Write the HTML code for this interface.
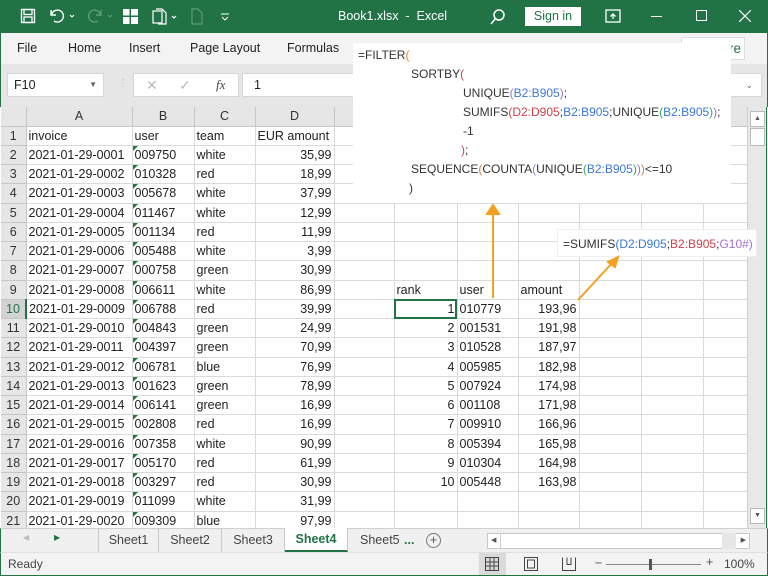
<!DOCTYPE html>
<html><head><meta charset="utf-8"><style>
*{margin:0;padding:0;box-sizing:border-box}
body{width:768px;height:576px;overflow:hidden;background:#fff;font-family:"Liberation Sans",sans-serif;font-size:12.5px;color:#222;position:relative}
.abs{position:absolute}
#title{left:0;top:0;width:768px;height:33px;background:#217346;color:#fff}
#rib{left:0;top:33px;width:768px;height:31px;background:#f3f3f3;border-left:1px solid #217346;border-right:1px solid #217346}
#fbar{left:0;top:64px;width:768px;height:43px;background:#e6e6e6;border-left:1px solid #217346;border-right:1px solid #217346}
table{position:absolute;left:1px;top:107px;border-collapse:collapse;table-layout:fixed}
td{height:19.25px;border-right:1px solid #dadada;border-bottom:1px solid #dadada;padding:0 2px;white-space:nowrap;overflow:hidden;position:relative;font-size:12.5px;line-height:18px}
tr.h td{background:#e6e6e6;text-align:center;height:19px;border-color:#c6c6c6;color:#333}
td.rh{background:#e6e6e6;text-align:center;border-color:#c6c6c6;color:#333;padding:0}
td.r{text-align:right}
td.t::before{content:"";position:absolute;left:0;top:0;border-top:5px solid #1e7b34;border-right:5px solid transparent}
#tabs{left:0;top:528px;width:768px;height:24px;background:#f0f0f0;border-left:1px solid #217346;border-right:1px solid #217346;border-top:1px solid #d0d0d0}
#status{left:0;top:552px;width:768px;height:24px;background:#f3f3f3;border:1px solid #217346;border-top:1px solid #e0e0e0}
.tab{position:absolute;top:0;height:23px;line-height:22px;color:#444;font-size:12.5px;text-align:center;border-right:1px solid #c8c8c8}
.call{background:#fff;color:#333;font-size:12px}
.b{color:#3c78d8}.rd{color:#d0404a}.p{color:#a070d0}.g{color:#3aa860}.o{color:#e08030}
</style></head><body>
<div id="title" class="abs">
<svg class="abs" style="left:20px;top:8px" width="16" height="16" viewBox="0 0 16 16" fill="none" stroke="#fff" stroke-width="1.3"><rect x="1.5" y="1.5" width="13" height="13"/><rect x="4" y="1.5" width="8" height="5"/><rect x="4" y="9" width="8" height="5.5"/></svg>
<svg class="abs" style="left:48px;top:7px" width="30" height="18" viewBox="0 0 30 18" fill="none" stroke="#fff" stroke-width="1.4"><path d="M3 3v5h5M3.5 8A6 6 0 1 1 6 14"/><path d="M22 8l2 2 2-2" stroke-width="1"/></svg>
<svg class="abs" style="left:86px;top:7px" width="30" height="18" viewBox="0 0 30 18" fill="none" stroke="#5f9a7a" stroke-width="1.4"><path d="M15 3v5h-5M14.5 8A6 6 0 1 0 12 14"/><path d="M22 8l2 2 2-2" stroke-width="1"/></svg>
<svg class="abs" style="left:123px;top:9px" width="15" height="15" viewBox="0 0 15 15" fill="#fff"><rect x="0" y="0" width="6.5" height="6.5"/><rect x="8" y="0" width="7" height="6.5"/><rect x="0" y="8" width="6.5" height="7"/><rect x="8" y="8" width="7" height="7"/></svg>
<svg class="abs" style="left:152px;top:8px" width="28" height="18" viewBox="0 0 28 18" fill="none" stroke="#fff" stroke-width="1.2"><rect x="1" y="3" width="9" height="12"/><path d="M4 1h6l4 4v11H6"/><path d="M20 8l2 2 2-2"/></svg>
<svg class="abs" style="left:190px;top:8px" width="14" height="18" viewBox="0 0 14 18" fill="none" stroke="#5f9a7a" stroke-width="1.2"><path d="M2 1h6l4 4v11H2z"/></svg>
<svg class="abs" style="left:220px;top:12px" width="10" height="10" viewBox="0 0 10 10" fill="none" stroke="#fff"><path d="M1 2h8M2 5l3 3 3-3"/></svg>
<div class="abs" style="left:338px;top:9px;font-size:12.5px">Book1.xlsx &nbsp;- &nbsp;Excel</div>
<svg class="abs" style="left:489px;top:8px" width="18" height="18" viewBox="0 0 18 18" fill="none" stroke="#fff" stroke-width="1.5"><circle cx="10" cy="7" r="5"/><path d="M6.5 10.5L2 16"/></svg>
<div class="abs" style="left:525px;top:7px;width:56px;height:19px;background:#fff;color:#217346;text-align:center;line-height:19px;font-size:12.5px">Sign in</div>
<svg class="abs" style="left:605px;top:9px" width="16" height="14" viewBox="0 0 16 14" fill="none" stroke="#fff" stroke-width="1.3"><rect x="1" y="1" width="14" height="12"/><path d="M8 10V5M5.5 7.5L8 5l2.5 2.5" /></svg>
<div class="abs" style="left:651px;top:16px;width:11px;height:1px;background:#fff"></div>
<div class="abs" style="left:696px;top:10px;width:11px;height:11px;border:1px solid #fff"></div>
<svg class="abs" style="left:739px;top:10px" width="12" height="12" viewBox="0 0 12 12" stroke="#fff" stroke-width="1.2"><path d="M0 0L12 12M12 0L0 12"/></svg>
</div>
<div id="rib" class="abs">
<div class="abs" style="left:16px;top:8px">File</div>
<div class="abs" style="left:67px;top:8px">Home</div>
<div class="abs" style="left:128px;top:8px">Insert</div>
<div class="abs" style="left:189px;top:8px">Page Layout</div>
<div class="abs" style="left:286px;top:8px">Formulas</div>
<div class="abs" style="left:680px;top:4px;width:64px;height:23px;background:#fff;border:1px solid #ddd;color:#217346;text-align:right;padding-right:3px;line-height:21px;font-size:13.5px">Share</div>
</div>
<div id="fbar" class="abs">
<div class="abs" style="left:6px;top:9px;width:97px;height:24px;background:#fff;border:1px solid #d6d6d6;padding-left:6px;line-height:22px">F10<span style="position:absolute;right:6px;top:0;font-size:8px;color:#666">▼</span></div>
<div class="abs" style="left:117px;top:14px;color:#bbb;font-size:10px">⋮</div>
<div class="abs" style="left:132px;top:9px;width:106px;height:24px;background:#fff;border:1px solid #d6d6d6;color:#bbb"><span class="abs" style="left:12px;top:3px;font-size:14px">✕</span><span class="abs" style="left:45px;top:3px;font-size:14px">✓</span><span class="abs" style="left:82px;top:3px;font-style:italic;font-family:'Liberation Serif';color:#444;font-size:13px">fx</span></div>
<div class="abs" style="left:241px;top:9px;width:520px;height:24px;background:#fff;border:1px solid #d6d6d6;padding-left:11px;line-height:22px">1<span style="position:absolute;right:8px;top:0;font-size:9px;color:#666">⌄</span></div>
</div>
<table>
<colgroup><col style="width:25px"><col style="width:106px"><col style="width:62px"><col style="width:61px"><col style="width:79px"><col style="width:60px"><col style="width:63px"><col style="width:61px"><col style="width:61px"><col style="width:62px"><col style="width:62px"><col style="width:46px"></colgroup>
<tr class="h"><td></td><td>A</td><td>B</td><td>C</td><td>D</td><td>E</td><td style="background:#d2d2d2;color:#217346;border-bottom:2px solid #217346">F</td><td>G</td><td>H</td><td>I</td><td>J</td><td>K</td></tr>
<tr><td class="rh">1</td><td>invoice</td><td>user</td><td>team</td><td>EUR amount</td><td></td><td></td><td></td><td></td><td></td><td></td><td></td></tr>
<tr><td class="rh">2</td><td>2021-01-29-0001</td><td class="t">009750</td><td>white</td><td class="r">35,99</td><td></td><td></td><td></td><td></td><td></td><td></td><td></td></tr>
<tr><td class="rh">3</td><td>2021-01-29-0002</td><td class="t">010328</td><td>red</td><td class="r">18,99</td><td></td><td></td><td></td><td></td><td></td><td></td><td></td></tr>
<tr><td class="rh">4</td><td>2021-01-29-0003</td><td class="t">005678</td><td>white</td><td class="r">37,99</td><td></td><td></td><td></td><td></td><td></td><td></td><td></td></tr>
<tr><td class="rh">5</td><td>2021-01-29-0004</td><td class="t">011467</td><td>white</td><td class="r">12,99</td><td></td><td></td><td></td><td></td><td></td><td></td><td></td></tr>
<tr><td class="rh">6</td><td>2021-01-29-0005</td><td class="t">001134</td><td>red</td><td class="r">11,99</td><td></td><td></td><td></td><td></td><td></td><td></td><td></td></tr>
<tr><td class="rh">7</td><td>2021-01-29-0006</td><td class="t">005488</td><td>white</td><td class="r">3,99</td><td></td><td></td><td></td><td></td><td></td><td></td><td></td></tr>
<tr><td class="rh">8</td><td>2021-01-29-0007</td><td class="t">000758</td><td>green</td><td class="r">30,99</td><td></td><td></td><td></td><td></td><td></td><td></td><td></td></tr>
<tr><td class="rh">9</td><td>2021-01-29-0008</td><td class="t">006611</td><td>white</td><td class="r">86,99</td><td></td><td>rank</td><td>user</td><td>amount</td><td></td><td></td><td></td></tr>
<tr><td class="rh" style="background:#d2d2d2;color:#217346;border-right:2px solid #217346">10</td><td>2021-01-29-0009</td><td class="t">006788</td><td>red</td><td class="r">39,99</td><td></td><td class="r" style="outline:2px solid #217346;outline-offset:-2px">1</td><td>010779</td><td class="r">193,96</td><td></td><td></td><td></td></tr>
<tr><td class="rh">11</td><td>2021-01-29-0010</td><td class="t">004843</td><td>green</td><td class="r">24,99</td><td></td><td class="r">2</td><td>001531</td><td class="r">191,98</td><td></td><td></td><td></td></tr>
<tr><td class="rh">12</td><td>2021-01-29-0011</td><td class="t">004397</td><td>green</td><td class="r">70,99</td><td></td><td class="r">3</td><td>010528</td><td class="r">187,97</td><td></td><td></td><td></td></tr>
<tr><td class="rh">13</td><td>2021-01-29-0012</td><td class="t">006781</td><td>blue</td><td class="r">76,99</td><td></td><td class="r">4</td><td>005985</td><td class="r">182,98</td><td></td><td></td><td></td></tr>
<tr><td class="rh">14</td><td>2021-01-29-0013</td><td class="t">001623</td><td>green</td><td class="r">78,99</td><td></td><td class="r">5</td><td>007924</td><td class="r">174,98</td><td></td><td></td><td></td></tr>
<tr><td class="rh">15</td><td>2021-01-29-0014</td><td class="t">006141</td><td>green</td><td class="r">16,99</td><td></td><td class="r">6</td><td>001108</td><td class="r">171,98</td><td></td><td></td><td></td></tr>
<tr><td class="rh">16</td><td>2021-01-29-0015</td><td class="t">002808</td><td>red</td><td class="r">16,99</td><td></td><td class="r">7</td><td>009910</td><td class="r">166,96</td><td></td><td></td><td></td></tr>
<tr><td class="rh">17</td><td>2021-01-29-0016</td><td class="t">007358</td><td>white</td><td class="r">90,99</td><td></td><td class="r">8</td><td>005394</td><td class="r">165,98</td><td></td><td></td><td></td></tr>
<tr><td class="rh">18</td><td>2021-01-29-0017</td><td class="t">005170</td><td>red</td><td class="r">61,99</td><td></td><td class="r">9</td><td>010304</td><td class="r">164,98</td><td></td><td></td><td></td></tr>
<tr><td class="rh">19</td><td>2021-01-29-0018</td><td class="t">003297</td><td>red</td><td class="r">30,99</td><td></td><td class="r">10</td><td>005448</td><td class="r">163,98</td><td></td><td></td><td></td></tr>
<tr><td class="rh">20</td><td>2021-01-29-0019</td><td class="t">011099</td><td>white</td><td class="r">31,99</td><td></td><td></td><td></td><td></td><td></td><td></td><td></td></tr>
<tr><td class="rh">21</td><td>2021-01-29-0020</td><td class="t">009309</td><td>blue</td><td class="r">97,99</td><td></td><td></td><td></td><td></td><td></td><td></td><td></td></tr>
</table>
<div class="abs" style="left:747px;top:107px;width:20px;height:421px;background:#e8e8e8;border-left:1px solid #d0d0d0;border-right:1px solid #217346">
<div class="abs" style="left:2px;top:4px;width:15px;height:16px;background:#fff;border:1px solid #bbb;font-size:7px;text-align:center;line-height:14px;color:#555">▲</div>
<div class="abs" style="left:2px;top:21px;width:15px;height:18px;background:#fff;border:1px solid #bbb"></div>
<div class="abs" style="left:2px;top:401px;width:15px;height:16px;background:#fff;border:1px solid #bbb;font-size:7px;text-align:center;line-height:14px;color:#555">▼</div>
</div>
<div class="abs call" style="left:353px;top:43px;width:378px;height:160px;line-height:19px;padding-top:3px">
<div style="padding-left:5px">=FILTER<span class="o">(</span></div>
<div style="padding-left:58px">SORTBY<span class="rd">(</span></div>
<div style="padding-left:110px">UNIQUE<span class="p">(</span><span class="b">B2:B905</span><span class="p">)</span>;</div>
<div style="padding-left:110px">SUMIFS<span class="rd">(</span><span class="rd">D2:D905</span>;<span class="b">B2:B905</span>;UNIQUE<span class="g">(</span><span class="b">B2:B905</span><span class="g">)</span><span class="p">)</span>;</div>
<div style="padding-left:110px">-1</div>
<div style="padding-left:108px"><span class="rd">)</span>;</div>
<div style="padding-left:58px">SEQUENCE<span class="o">(</span>COUNTA<span class="p">(</span>UNIQUE<span class="g">(</span><span class="b">B2:B905</span><span class="g">)</span><span class="p">)</span><span class="o">)</span>&lt;=10</div>
<div style="padding-left:56px">)</div>
</div>
<div class="abs call" style="left:557px;top:229px;width:200px;height:28px;line-height:28px;padding-left:5px;border:1px solid #eee">=SUMIFS<span class="b">(D2:D905</span>;<span class="rd">B2:B905</span>;<span class="p">G10#)</span></div>
<svg class="abs" style="left:0;top:0" width="768" height="576" viewBox="0 0 768 576" fill="none" stroke="#f5a020" stroke-width="2">
<path d="M493 298V210"/><path d="M487 214l6-9 6 9z" fill="#f5a020"/>
<path d="M578 300L614 261"/><path d="M608 262l10-5-3 10z" fill="#f5a020"/>
</svg>
<div id="tabs" class="abs">
<div class="abs" style="left:22px;top:4px;color:#bbb;font-size:8px">◀</div>
<div class="abs" style="left:53px;top:4px;color:#217346;font-size:8px">▶</div>
<div class="abs" style="left:97px;top:0;width:1px;height:23px;background:#c8c8c8"></div>
<div class="tab" style="left:98px;width:60px">Sheet1</div>
<div class="tab" style="left:158px;width:63px">Sheet2</div>
<div class="tab" style="left:221px;width:63px">Sheet3</div>
<div class="tab" style="left:284px;width:63px;background:#fff;color:#217346;font-weight:bold;border-bottom:2px solid #217346;height:24px;top:-1px">Sheet4</div>
<div class="tab" style="left:347px;width:70px;border:none;text-align:left;padding-left:12px;overflow:hidden;white-space:nowrap">Sheet5<b style="color:#217346;position:absolute;left:54px;background:#f0f0f0;padding-left:2px">...</b></div>
<div class="abs" style="left:425px;top:4px;width:15px;height:15px;border:1px solid #777;border-radius:50%;text-align:center;line-height:12px;color:#555">+</div>
<div class="abs" style="left:486px;top:4px;width:263px;height:16px;background:#fff;border:1px solid #c8c8c8"><span class="abs" style="left:3px;top:2px;font-size:7px;color:#555">◀</span><span class="abs" style="right:3px;top:2px;font-size:7px;color:#555">▶</span><div class="abs" style="left:12px;top:0;width:1px;height:14px;background:#ccc"></div><div class="abs" style="left:234px;top:-1px;width:14px;height:16px;background:#e6e6e6"></div></div>
</div>
<div id="status" class="abs">
<div class="abs" style="left:7px;top:4px;color:#444;font-size:12px">Ready</div>
<div class="abs" style="left:478px;top:0;width:27px;height:22px;background:#dadada"></div>
<svg class="abs" style="left:484px;top:4px" width="14" height="14" viewBox="0 0 14 14" fill="none" stroke="#444"><rect x=".5" y=".5" width="13" height="13"/><path d="M.5 5h13M.5 9h13M5 .5v13M9 .5v13"/></svg>
<svg class="abs" style="left:523px;top:4px" width="14" height="14" viewBox="0 0 14 14" fill="none" stroke="#444"><rect x=".5" y=".5" width="13" height="13"/><rect x="3.5" y="3" width="7" height="8"/></svg>
<svg class="abs" style="left:561px;top:4px" width="14" height="14" viewBox="0 0 14 14" fill="none" stroke="#444"><path d="M.5 .5v13h13V.5M5 .5v7h4V.5"/></svg>
<div class="abs" style="left:594px;top:3px;color:#555">−</div>
<div class="abs" style="left:605px;top:11px;width:95px;height:1px;background:#888"></div>
<div class="abs" style="left:648px;top:6px;width:3px;height:11px;background:#555"></div>
<div class="abs" style="left:705px;top:2px;color:#555">+</div>
<div class="abs" style="left:723px;top:4px;color:#444;font-size:12px">100%</div>
</div>
</body></html>
